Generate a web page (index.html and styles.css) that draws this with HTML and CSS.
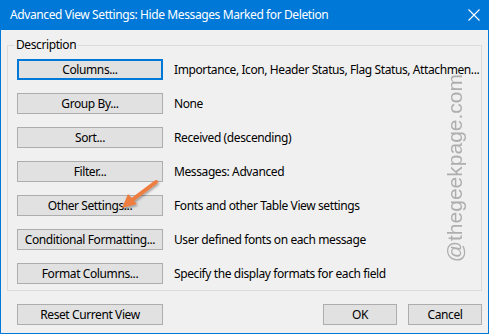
FILE: index.html
```html
<!DOCTYPE html>
<html>
<head>
<meta charset="utf-8">
<link rel="stylesheet" href="styles.css">
</head>
<body>
<div class="dialog">
  <div class="titlebar">
    <span class="title">Advanced View Settings: Hide Messages Marked for Deletion</span>
    <svg class="close" width="12" height="12" viewBox="0 0 12 12"><path d="M0.5 0.5 L11.5 11.5 M11.5 0.5 L0.5 11.5" stroke="#fff" stroke-width="1.1" fill="none"/></svg>
  </div>
  <div class="body">
    <fieldset class="group">
      <legend>Description</legend>
      <div class="row"><button class="btn btn-default">Columns...</button><span class="desc">Importance, Icon, Header Status, Flag Status, Attachmen...</span></div>
      <div class="row"><button class="btn">Group By...</button><span class="desc">None</span></div>
      <div class="row"><button class="btn">Sort...</button><span class="desc">Received (descending)</span></div>
      <div class="row"><button class="btn">Filter...</button><span class="desc">Messages: Advanced</span></div>
      <div class="row"><button class="btn">Other Settings...</button><span class="desc">Fonts and other Table View settings</span></div>
      <div class="row"><button class="btn">Conditional Formatting...</button><span class="desc">User defined fonts on each message</span></div>
      <div class="row"><button class="btn">Format Columns...</button><span class="desc">Specify the display formats for each field</span></div>
    </fieldset>
    <div class="footer">
      <button class="btn">Reset Current View</button>
      <div class="actions">
        <button class="btn btn-small">OK</button>
        <button class="btn btn-small">Cancel</button>
      </div>
    </div>
  </div>
  <div class="watermark">@thegeekpage.com</div>
  <svg class="arrow" width="50" height="40" viewBox="0 0 50 40">
    <defs><filter id="sh" x="-30%" y="-30%" width="160%" height="160%"><feDropShadow dx="1" dy="1.5" stdDeviation="1.2" flood-color="#000" flood-opacity="0.35"/></filter></defs>
    <g filter="url(#sh)">
      <path d="M42 3 L18 21" stroke="#ee7d3f" stroke-width="4" stroke-linecap="round" fill="none"/>
      <path d="M8 29 L14 15 L23 25 Z" fill="#ee7d3f"/>
    </g>
  </svg>
</div>
</body>
</html>
```
FILE: styles.css
```css
* { box-sizing: border-box; }
html, body { margin: 0; padding: 0; }
body {
  width: 489px;
  height: 334px;
  overflow: hidden;
  background: #f0f0f0;
  font-family: "Noto Sans", "Open Sans", sans-serif;
  font-size: 12px;
  letter-spacing: -0.4px;
  color: #000;
}
.dialog {
  position: relative;
  width: 489px;
  height: 334px;
  border: 1px solid #0078d7;
  border-top: none;
  background: #f0f0f0;
  display: flex;
  flex-direction: column;
}
.titlebar {
  height: 30px;
  margin: 0 -1px;
  background: #0078d7;
  color: #fff;
  display: flex;
  align-items: center;
  justify-content: space-between;
  padding: 0 9px 0 10px;
  flex: none;
}
.title { font-size: 12px; line-height: 16px; }
.close { display: block; }
.body {
  padding: 7px 6px 0 6px;
  display: flex;
  flex-direction: column;
}
.group {
  margin: 0;
  padding: 6px 9px 6px 9px;
  border: 1px solid #dcdcdc;
  display: flex;
  flex-direction: column;
  gap: 13px;
  min-width: 0;
}
.group legend {
  padding: 0 2px;
  margin-left: -3px;
  line-height: 16px;
  height: 16px;
}
.row {
  display: flex;
  align-items: center;
  gap: 11px;
  height: 21px;
}
.btn {
  font-family: inherit;
  font-size: 12px;
  letter-spacing: inherit;
  color: #000;
  background: #e1e1e1;
  border: 1px solid #adadad;
  border-radius: 0;
  height: 21px;
  width: 146px;
  padding: 0;
  line-height: 19px;
  margin: 0;
  flex: none;
}
.btn-default { border: 2px solid #0078d7; line-height: 17px; }
.desc { white-space: nowrap; line-height: 16px; }
.footer {
  margin-top: 13px;
  display: flex;
  justify-content: space-between;
  align-items: center;
  padding-left: 10px;
}
.actions { display: flex; gap: 11px; }
.btn-small { width: 74px; }
.watermark {
  position: absolute;
  left: 443px;
  top: 74px;
  writing-mode: vertical-rl;
  transform: rotate(180deg);
  font-family: "Liberation Sans", Arial, sans-serif;
  font-size: 21px;
  letter-spacing: 0;
  color: rgba(120,120,120,0.55);
  line-height: 22px;
}
.arrow {
  position: absolute;
  left: 113px;
  top: 179px;
}
```
